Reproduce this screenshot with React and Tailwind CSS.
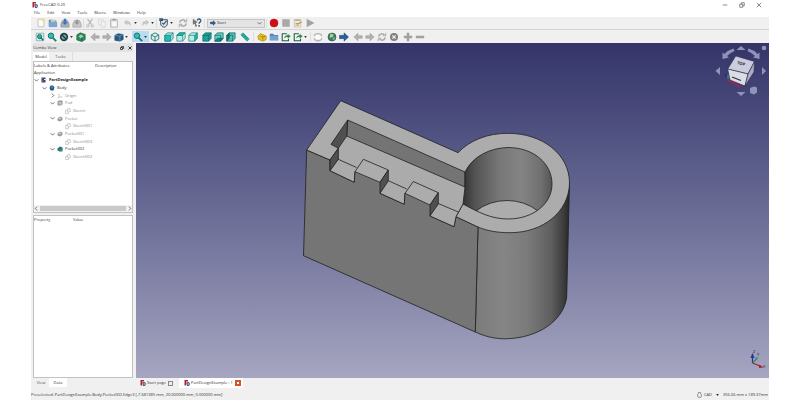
import React from 'react';

const glyphs = {
  file: <><path d="M2.5 1.5h5l2 2v7h-7z" fill="#fdfdf8" stroke="#bbb" /><circle cx="9" cy="2.5" r="1.8" fill="#f3dc62" /></>,
  open: <><path d="M1 2h4l1 1h4v7H1z" fill="#5f7d9e" /><path d="M1 5h10v6H1z" fill="#7ba5d3" /><path d="M3 2h6v3H3z" fill="#c8c8b4" /></>,
  save: <><path d="M1 7l2-4h6l2 4v4H1z" fill="#aab0b5" stroke="#8b9198" strokeWidth=".7" /><path d="M4.500 1h3v4h2L6 8.500 2.500 5h2z" fill="#3d78b5" /></>,
  print: <><path d="M1 7l2-4h6l2 4v4H1z" fill="#c9c9c9" stroke="#999" strokeWidth=".7" /><path d="M4.500 2h3v3h2L6 8 2.500 5h2z" fill="#999" /></>,
  cut: <g fill="none" stroke="#b5b5b5"><path d="M3 1l5 7M9 1L4 8" strokeWidth="1.300" /><circle cx="3.300" cy="9.500" r="1.500" /><circle cx="8.700" cy="9.500" r="1.500" /></g>,
  copy: <g fill="#f2f2f2" stroke="#d6d6d6"><path d="M2 1.500h5v7H2z" /><path d="M5 4h5v7H5z" /></g>,
  paste: <><path d="M2 2h8v9H2z" fill="#e8e8e8" stroke="#aaa" /><path d="M4 1h4v2H4z" fill="#9b9b9b" /><path d="M4 5h5v5H4z" fill="#fafafa" /></>,
  undo: <path d="M1 5l4-3v2c4 0 5 2 4 6-1-2-2-3-4-3v2z" fill="#c6c6c6" />,
  redo: <path d="M11 5L7 2v2c-4 0-5 2-4 6 1-2 2-3 4-3v2z" fill="#c6c6c6" />,
  shield: <><path d="M2 2h8v5c0 2-2 4-4 4S2 9 2 7z" fill="#dce3e8" stroke="#40596b" strokeWidth="1.200" /><path d="M1 1h3v2H1zM4 6l1.500 1.500L9 3.500" fill="none" stroke="#334f66" strokeWidth="1.300" /></>,
  refresh: <g fill="none" stroke="#acacac" strokeWidth="1.800"><path d="M2 5.500C2.500 2 7 1 9 4M10 6.500C9.500 10 5 11 3 8" /><path d="M10.500 1v3.500H7M1.500 11V7.500H5" strokeWidth="1.200" /></g>,
  help: <><path d="M1 1l6 4-2.500 1L6 9.500 4.500 11 3 7 1 8z" fill="#777" /><path d="M6.500 3c0-3 4.500-2 4 .5C10 5.500 8.500 5 8.500 7M8.500 8.500v2" fill="none" stroke="#2e5675" strokeWidth="1.700" /></>,
  record: <circle cx="6" cy="6" r="4.800" fill="#cf1018" stroke="#a20a10" strokeWidth=".6" />,
  stop: <path d="M1.500 1.500h9v9h-9z" fill="#a9a9a9" />,
  edit: <><path d="M1.500 2h8v9h-8z" fill="#eee8d4" stroke="#b7ad8c" strokeWidth=".6" /><path d="M2 2h7v1H2zM3 6h5v1H3zM3 8h4v1H3z" fill="#8c8878" /><path d="M5 7l5-3 1 1-5 3z" fill="#d29a34" /></>,
  play: <path d="M2 1l9.500 5L2 11z" fill="#a3a3a3" />,
  fit: <><path d="M1.500 1.500h9v9h-9z" fill="#e1f0ee" stroke="#83aaa5" /><circle cx="5.500" cy="5.500" r="2.600" fill="#2ab1a4" stroke="#136b66" /><path d="M7 7l3 3" stroke="#136b66" strokeWidth="1.700" /></>,
  zoom: <><circle cx="4.800" cy="4.500" r="3.300" fill="#35bbb0" stroke="#13776f" strokeWidth="1.200" /><path d="M7 7l4 4" stroke="#13776f" strokeWidth="2.200" /></>,
  ban: <><circle cx="6" cy="6" r="4" fill="#7fa39e" stroke="#1c4646" strokeWidth="2" /><path d="M3.500 3.500l5 5" stroke="#12302f" strokeWidth="1.500" /></>,
  box: <><path d="M1 3.500L5 1l6 2v6l-4 2.500-6-2z" fill="#2f8c54" stroke="#1c5937" strokeWidth=".8" /><path d="M3 5l3-2 3 2-3 3z" fill="#9bd2c7" /><path d="M7 6.500v4" stroke="#164d39" /></>,
  left: <path d="M1 6l5-4.500v3h5v3H6v3z" fill="#b2b2b2" stroke="#959595" strokeWidth=".6" />,
  right: <path d="M11 6L6 1.500v3H1v3h5v3z" fill="#b2b2b2" stroke="#959595" strokeWidth=".6" />,
  link: <><path d="M1 4l4-2 6 1v6l-4 2-6-1z" fill="#245984" stroke="#123b5c" strokeWidth=".6" /><path d="M1 4l6 1v6M7 5l4-2" fill="none" stroke="#79aad0" strokeWidth=".8" /></>,
  iso: <g fill="#d4f2ee" stroke="#18726d" strokeWidth="1"><path d="M6 1l4.500 2.500v5L6 11 1.500 8.500v-5z" /><path d="M1.500 3.500L6 6l4.500-2.500M6 6v5" /></g>,
  front: <g stroke="#147d78" strokeWidth=".8"><path d="M1 4l3-3h7v6.500L8 11H1z" fill="#9ce4dd" /><path d="M1 4h7v7H1z" fill="#21bdb1" /><path d="M8 4l3-3" /></g>,
  top: <g stroke="#147d78" strokeWidth=".8"><path d="M1 4l3-3h7v6.500L8 11H1z" fill="#bdece7" /><path d="M1 4l3-3h7L8 4z" fill="#21bdb1" /><path d="M1 4h7v7" fill="none" /></g>,
  side: <g stroke="#147d78" strokeWidth=".8"><path d="M1 4l3-3h7v6.500L8 11H1z" fill="#bdece7" /><path d="M8 4l3-3v6.500L8 11z" fill="#21bdb1" /><path d="M1 4h7" /></g>,
  rear: <g stroke="#0c6662" strokeWidth=".8"><path d="M1 4l3-3h7v6.500L8 11H1z" fill="#19a197" /><path d="M1 4h7v7M8 4l3-3" fill="none" /></g>,
  bottom: <g stroke="#0c6662" strokeWidth=".8"><path d="M1 4l3-3h7v6.500L8 11H1z" fill="#65c9c0" /><path d="M1 11l3-3.500h7L8 11z" fill="#138b83" /><path d="M1 4h7v7" fill="none" /></g>,
  leftside: <g stroke="#0c6662" strokeWidth=".8"><path d="M1 4l3-3h7v6.500L8 11H1z" fill="#54bdb4" /><path d="M1 4l3-3v6.500L1 11z" fill="#0d7a73" /><path d="M1 4h7v7" fill="none" /></g>,
  measure: <><path d="M1 3.500L3.500 1 11 8.500 8.500 11z" fill="#21b1a7" stroke="#147d78" strokeWidth=".6" /><path d="M4 4l1-1M6 6l1-1M8 8l1-1" stroke="#0d5a57" strokeWidth=".7" /></>,
  part: <><path d="M1 5l3-3 3 1 4 2v4l-4 2-5-2z" fill="#e4c11c" stroke="#a58312" strokeWidth=".8" /><path d="M4 5l3 1v3M7 6l3-1" fill="none" stroke="#876a0a" strokeWidth=".8" /></>,
  folder: <><path d="M1 2h4l1 1.500h5V10H1z" fill="#527ead" /><path d="M1 4.500h10V10H1z" fill="#72a2d4" /></>,
  export: <><path d="M7 2H1.500v8.500H9V8" fill="#f2f7f2" stroke="#215d50" strokeWidth="1.300" /><path d="M4 8c0-3 1.500-4 4-4V2l3.500 3L8 8V6C6 6 5 6.500 4 8z" fill="#2d8a43" /></>,
  page: <><path d="M1.500 5C2 1 10 1 10.500 5M1.500 7.500C2 11.500 10 11.500 10.500 7.500" fill="none" stroke="#b4b4b4" strokeWidth="1.600" /><path d="M3 3.500h6v5H3z" fill="#fafafa" /></>,
  globe: <><circle cx="6" cy="6" r="4.800" fill="#3b7c56" stroke="#2b534d" strokeWidth=".7" /><path d="M4 2l4 1-1 3-4 1z" fill="#a7da89" /><path d="M7 7l3-1-1 3-2 1z" fill="#78a7bf" /></>,
  go: <path d="M11.500 6L6 1v3H.5v4H6v3z" fill="#285f97" stroke="#173f69" strokeWidth=".5" />,
  close: <><circle cx="6" cy="6" r="4.800" fill="#808080" /><path d="M4 4l4 4M8 4L4 8" stroke="#eee" strokeWidth="1.500" /></>,
  plus: <path d="M4.500 1h3v3.500H11v3H7.500V11h-3V7.500H1v-3h3.500z" fill="#a0a0a0" />,
  minus: <path d="M1 4.500h10v3H1z" fill="#a0a0a0" />,
  logo: <><path d="M1 0h7v3H4v2h3v2H4v4H1z" fill="#b5202b" /><path d="M6 4.500l3-.5 2.500 2v4L9 12H6.500L5 9.500z" fill="#37578f" /><circle cx="8.300" cy="8" r="1.400" fill="#e8eef6" /></>,
  doc: <><path d="M1 1h8v10H1z" fill="#27497d" /><path d="M2 2h3v2H2zM2 6h3v4H2z" fill="#c03a43" /><path d="M6 4h4v2H6z" fill="#dce8f4" /></>,
  body: <><path d="M3 1h5l3 4-2 6H3L1 6z" fill="#265988" /><path d="M4 3l4 1-2 3z" fill="#6f9ecb" /></>,
  origin: <path d="M4 1v7h7M4 8l-3 3" fill="none" stroke="#aaa" strokeWidth="1.200" />,
  pad: <><path d="M1 3l3-2h7v8l-3 2H1z" fill="#999" /><path d="M3 5h5M3 7.500h5M8 4v6" stroke="#eee" /></>,
  sketch: <g fill="#fafafa" stroke="#adadad" strokeWidth="1.100"><path d="M1 5h6v6H1z" /><path d="M4 2l6-1 1 6-5 1z" /></g>,
  pocket: <><path d="M1 5l5-4 5 2v5l-5 3-5-2z" fill="#9a9a9a" /><path d="M3 6l4-3 2 1-4 3z" fill="#ddd" /></>,
  active: <><path d="M1 5l5-4 5 2v5l-5 3-5-2z" fill="#276790" /><path d="M5 5h6v6H5z" fill="#2d9955" /></>,
};

function Icon({ name, className = 'size-[10px]' }) {
  return <svg viewBox="0 0 12 12" className={`${className} shrink-0`} aria-hidden="true">{glyphs[name]}</svg>;
}

function Tool({ name, label, drop, active }) {
  return (
    <button aria-label={label || name} className={`flex h-[11px] shrink-0 items-center ${drop ? 'w-[17px]' : 'w-3'} ${active ? 'bg-[#b9dcf3]' : ''}`}>
      <span className="flex w-3 shrink-0 justify-center"><Icon name={name} /></span>
      {drop && <svg viewBox="0 0 4 3" className="h-[2px] w-[3px]"><path d="M0 0h4L2 3z" fill="#333" /></svg>}
    </button>
  );
}

function Group({ items }) {
  return <div className="flex">{items.map(([name, label, drop, active]) => <Tool key={label} name={name} label={label} drop={drop} active={active} />)}</div>;
}

const Divider = () => <div className="h-[9px] w-px bg-[#dedede]" />;

const tree = [
  ['pl-0', 'v', 'doc', 'PartDesignExample', 'font-bold text-[#222]'],
  ['pl-[8px]', 'v', 'body', 'Body', 'text-[#333]'],
  ['pl-[16px]', '>', 'origin', 'Origin', 'text-[#888]'],
  ['pl-[16px]', 'v', 'pad', 'Pad', 'text-[#888]'],
  ['pl-[24px]', '', 'sketch', 'Sketch', 'text-[#888]'],
  ['pl-[16px]', 'v', 'pocket', 'Pocket', 'text-[#888]'],
  ['pl-[24px]', '', 'sketch', 'Sketch001', 'text-[#888]'],
  ['pl-[16px]', 'v', 'pocket', 'Pocket001', 'text-[#888]'],
  ['pl-[24px]', '', 'sketch', 'Sketch003', 'text-[#888]'],
  ['pl-[16px]', 'v', 'active', 'Pocket002', 'text-[#333]'],
  ['pl-[24px]', '', 'sketch', 'Sketch002', 'text-[#888]'],
];

function Chevron({ dir }) {
  const d = { v: 'M1 2l3 3 3-3', '>': 'M3 1l3 3-3 3', '<': 'M5 1L2 4l3 3' }[dir];
  return <svg viewBox="0 0 8 8" className="size-[5px] shrink-0">{d && <path d={d} fill="none" stroke="#555" strokeWidth="1.300" />}</svg>;
}

function Dock() {
  return (
    <aside className="flex w-[105px] shrink-0 flex-col pr-[3px] pl-[2px]">
      <div className="flex h-[9px] items-center bg-[#e2e2e2]">
        <h2 className="flex-1">Combo View</h2>
        <button aria-label="Float" className="w-[8px]"><svg viewBox="0 0 8 8" className="size-[4px]"><path d="M1 3h4v4H1zM3 3V1h4v4H5" fill="none" stroke="#222" strokeWidth="1.500" /></svg></button>
        <button aria-label="Close panel" className="w-[5px]"><svg viewBox="0 0 8 8" className="size-[4px]"><path d="M1 1l6 6M7 1L1 7" stroke="#222" strokeWidth="1.800" /></svg></button>
      </div>
      <div className="flex h-[9px]">
        <button className="w-4 bg-white">Model</button>
        <button className="w-6 border-r border-[#ddd] text-[#555]">Tasks</button>
      </div>
      <div className="flex h-[152px] flex-col border border-[#c2c2c2] bg-white">
        <div className="flex h-[7px] items-center">
          <span className="w-[61px]">Labels &amp; Attributes</span><span>Description</span>
        </div>
        <ul className="grid h-[92px] grid-rows-12">
          <li className="flex items-center">Application</li>
          {tree.map(([pad, dir, icon, text, tone]) => (
            <li key={text} className={`flex items-center ${pad} ${tone}`}>
              <Chevron dir={dir} /><Icon name={icon} className="mr-[2px] ml-[2px] size-[6px]" />{text}
            </li>
          ))}
        </ul>
        <div className="mt-auto flex h-[7px] items-center bg-[#f1f1f1]">
          <Chevron dir="<" /><div className="mx-px h-[5px] flex-1 bg-[#c9c9c9]" /><Chevron dir=">" />
        </div>
      </div>
      <div className="mt-[2px] flex-1 border border-[#c2c2c2] bg-white">
        <div className="flex h-[8px] items-center"><span className="w-[39px]">Property</span><span>Value</span></div>
      </div>
      <div className="flex h-[11px] items-start">
        <button className="h-[9px] w-4 text-[#555]">View</button>
        <button className="h-[9px] w-[18px] bg-white">Data</button>
      </div>
    </aside>
  );
}

function Viewport() {
  return (
    <svg viewBox="136 43 633 335" className="min-h-0 w-full flex-1 bg-linear-to-b from-[#343469] to-[#a6a6c1]" role="img" aria-label="3D view">
      <defs>
        <linearGradient id="outer" x1="475" x2="570" y1="0" y2="0" gradientUnits="userSpaceOnUse">
          <stop offset="0" stopColor="#7b7b7b" /><stop offset=".3" stopColor="#858585" /><stop offset=".55" stopColor="#7b7b7b" /><stop offset=".8" stopColor="#5f5f5f" /><stop offset=".93" stopColor="#3d3d3d" /><stop offset="1" stopColor="#242424" />
        </linearGradient>
        <linearGradient id="inner" x1="464" x2="552" y1="0" y2="0" gradientUnits="userSpaceOnUse">
          <stop offset="0" stopColor="#353535" /><stop offset=".12" stopColor="#525252" /><stop offset=".4" stopColor="#777" /><stop offset=".65" stopColor="#848484" /><stop offset=".88" stopColor="#6f6f6f" /><stop offset="1" stopColor="#555" />
        </linearGradient>
        <clipPath id="bore"><path d="M465 172C473 156 490 148 508 147.500C533 147.500 552 163 552 184C552 204 533 219 508 219C491 219 478 212 463 204L465 187z" /></clipPath>
      </defs>
      <g stroke="#202020" strokeWidth=".8" strokeLinejoin="round">
        <path d="M478 227L475.300 332C484 336 494 339 506 338.800C539 338 564 320 566.700 297L569.500 183z" fill="url(#outer)" />
        <path d="M306.700 150L303.500 255.700L475.300 332L478 227L456 216.700L454 226.700L430 216L430 205L405 193.300L404.300 204.300L380 193.300V182.300L355 171.700L354.300 182.300L330 170.700V160z" fill="#757575" />
        <path d="M340.700 100.700L458 152.700C470 140 488 133.300 508 133.300C542 133.300 569.500 154 569.500 183C569 212 543 232.700 510 232.700C498 232.700 487 231 478 227L456 216.700L463 204L338.300 148.300L330 160L306.700 150z" fill="#acacac" />
        <path d="M346.700 136L465 187L463 204L456 216.700L454 226.700L430 216L380 193.300L354.300 182.300L330 170.700L338.300 159.300V148.300z" fill="#ababab" stroke="none" />
        <path d="M347.700 120L465 172V187L346.700 136z" fill="#747474" />
        <path d="M347.700 120L331 144.300L338.300 148.300L346.700 136z" fill="#505050" />
        <path d="M338.300 148.300L330 160V170.700L338.300 159.300z" fill="#505050" />
        <path d="M338.300 159.300L356.500 167.500M388.300 180.700L406.700 189M438.300 203.500L458.300 212M330 170.700L354.300 182.300L355 171.700M380 193.300L404.300 204.300L405 193.300M430 216L454 226.700L456 216.700L463 204" fill="none" />
        <path d="M355 171.700L380 182.300V193.500L354.300 183z" fill="#757575" stroke="none" />
        <path d="M405 193.300L430 205V216.500L404.300 205z" fill="#757575" stroke="none" />
        <path d="M355 171.700L363.300 159.300L388.300 170L380 182.300zM405 193.300L413.300 181.500L438.300 192.700L430 205z" fill="#acacac" />
        <path d="M388.300 170L380 182.300V193.300L388.300 181zM438.300 192.700L430 205V216L438.300 204z" fill="#505050" />
        <path d="M355 171.700L354.300 182.300M405 193.300L404.300 204.300" />
        <g clipPath="url(#bore)">
          <path d="M460 145h95v80h-95z" fill="url(#inner)" stroke="none" />
          <ellipse cx="507" cy="236" rx="43.500" ry="35.500" fill="#acacac" />
        </g>
        <path d="M465 172C473 156 490 148 508 147.500C533 147.500 552 163 552 184C552 204 533 219 508 219C491 219 478 212 463 204L465 187z" fill="none" />
      </g>
      <g fill="#9292b8">
        <path d="M736.500 50l4.500-4 4.500 4zM736.500 92l4.500 4 4.500-4zM720 67v8l-4.500-4zM762 67v8l4-4z" />
        <circle cx="764" cy="48" r="2.300" />
        <path d="M733.500 48.500Q728 50 724.500 54L722.500 52.500V59L729 57.500L727 56Q730 53 734.500 51zM748.500 48.500Q754 50 757.500 54L759.500 52.500V59L753 57.500L755 56Q752 53 747.500 51z" />
        <path d="M750 88l4-1.500 3 1v5l-3 2-4-1.500z" />
      </g>
      <g stroke="#28283a" strokeWidth=".6" strokeLinejoin="round">
        <path d="M735.700 56L754.500 61.500L748 74L727.700 69z" fill="#ccccdf" />
        <path d="M727.700 69L748 74L745 86L730 80z" fill="#dcdce8" />
        <path d="M754.500 61.500L754 72L745 86L748 74z" fill="#acacc8" />
        <path d="M732 77l9 3.500" stroke="#333" strokeWidth="1.200" />
      </g>
      <text x="737" y="65" fontSize="4" fontWeight="bold" fill="#222" transform="rotate(14 741 64)">TOP</text>
      <path d="M724.500 74l4 5" stroke="#2629a4" strokeWidth="1.200" /><path d="M728 80l12 7" stroke="#a62347" strokeWidth="1.500" /><path d="M728 79V75" stroke="#43aa63" />
      <g fill="none" strokeWidth="1.200">
        <path d="M752.500 363V354" stroke="#24349b" /><path d="M752.500 363l4-4" stroke="#2a8f5c" /><path d="M752.500 363l10 4" stroke="#a52232" />
      </g>
      <path d="M750.500 358l2-5 2 5z" fill="#24349b" /><path d="M759 364.500l4 3-4 .5z" fill="#a52232" /><path d="M755 358l3-1-1 3z" fill="#2a8f5c" />
      <g fontSize="4" fill="#222"><text x="753" y="353">Z</text><text x="757" y="356">Y</text><text x="763" y="368">X</text></g>
    </svg>
  );
}

export default function App() {
  return (
    <div className="min-h-screen bg-white px-[31px] font-['Open_Sans','Noto_Sans',sans-serif] text-[4px] leading-[6px] text-[#333]">
      <div className="flex min-h-screen flex-col bg-[#f0f0f0]">
        <header className="bg-white">
          <div className="flex h-[9px] items-center pl-px">
            <Icon name="logo" className="size-[6px]" />
            <h1 className="ml-[2px] flex-1">FreeCAD 0.20</h1>
            <div className="flex gap-[11px] pr-[7px]">
              {[['Minimize', 'M1 4h6'], ['Restore', 'M1 3h4v4H1zM3 3V1h4v4H5'], ['Close', 'M1 1l6 6M7 1L1 7']].map(([label, d]) => (
                <button key={label} aria-label={label}><svg viewBox="0 0 8 8" className="size-[6px]"><path d={d} fill="none" stroke="#555" strokeWidth=".9" /></svg></button>
              ))}
            </div>
          </div>
          <nav className="flex h-[8px] items-center gap-[7px] pl-[3px]">
            {['File', 'Edit', 'View', 'Tools', 'Macro', 'Windows', 'Help'].map((item) => <button key={item}>{item}</button>)}
          </nav>
        </header>

        <div className="flex h-[13px] items-center border-b border-[#d4d4d4] pl-1">
          <Group items={[['file', 'New'], ['open', 'Open'], ['save', 'Save'], ['print', 'Print']]} />
          <Divider />
          <Group items={[['cut', 'Cut'], ['copy', 'Copy'], ['paste', 'Paste']]} />
          <div className="ml-[2px] flex"><Group items={[['undo', 'Undo', true], ['redo', 'Redo', true]]} /></div>
          <Divider />
          <div className="ml-px flex gap-[2px]">
            <Tool name="shield" label="Validate" drop />
            <Tool name="refresh" label="Refresh" />
            <Tool name="help" label="What is this" />
          </div>
          <div className="mr-[2px] ml-px"><Divider /></div>
          <label className="flex h-[9px] w-[58px] items-center border border-[#c4c4c4] bg-[#e4e4e4] px-[2px]">
            <Icon name="go" className="size-[6px]" />
            <select aria-label="Workbench" className="ml-px h-[7px] flex-1 appearance-none bg-transparent"><option>Start</option><option>Part Design</option></select>
            <Chevron dir="v" />
          </label>
          <div className="mx-px"><Divider /></div>
          <Group items={[['record', 'Record macro'], ['stop', 'Stop macro'], ['edit', 'Edit macro'], ['play', 'Run macro']]} />
        </div>

        <div className="flex h-[13px] items-center pl-[3px]">
          <Group items={[['fit', 'Fit all'], ['zoom', 'Fit selection'], ['ban', 'Draw style', true], ['box', 'Bounding box']]} />
          <div className="ml-[2px]"><Group items={[['left', 'Back'], ['right', 'Forward'], ['link', 'Linked object', true]]} /></div>
          <div className="ml-[2px]"><Group items={[['zoom', 'Zoom', true, true], ['iso', 'Isometric']]} /></div>
          <div className="ml-[2px]"><Group items={[['front', 'Front'], ['top', 'Top'], ['side', 'Right']]} /></div>
          <div className="ml-[2px]"><Group items={[['rear', 'Rear'], ['bottom', 'Bottom'], ['leftside', 'Left']]} /></div>
          <div className="ml-[2px] flex"><Tool name="measure" label="Measure" /></div>
          <div className="mx-[2px]"><Divider /></div>
          <Group items={[['part', 'Create part'], ['folder', 'Create group'], ['export', 'Make link'], ['export', 'Link actions', true]]} />
          <div className="mx-px"><Divider /></div>
          <Tool name="page" label="Start page" />
          <div className="ml-[2px]"><Group items={[['globe', 'Open website'], ['go', 'Go']]} /></div>
          <div className="ml-[2px]"><Group items={[['left', 'Previous page'], ['right', 'Next page'], ['refresh', 'Reload page'], ['close', 'Stop loading']]} /></div>
          <div className="ml-[2px]"><Group items={[['plus', 'Zoom in'], ['minus', 'Zoom out']]} /></div>
        </div>

        <main className="flex flex-1">
          <Dock />
          <section className="flex min-w-0 flex-1 flex-col">
            <Viewport />
            <div className="flex h-[11px] items-start">
              <button className="flex h-[10px] w-[43px] items-center gap-px pl-[4px]">
                <Icon name="logo" className="size-[6px]" />Start page<span className="ml-px size-[5px] border border-[#888]" />
              </button>
              <button className="flex h-[10px] items-center gap-px bg-white pr-[2px] pl-[5px]">
                <Icon name="logo" className="size-[6px]" />PartDesignExample : 1
                <svg viewBox="0 0 6 6" className="ml-px size-[6px]"><path d="M0 0h6v6H0z" fill="#d4542c" /><path d="M2 2l2 2M4 2L2 4" stroke="#fff" /></svg>
              </button>
            </div>
          </section>
        </main>

        <footer className="flex h-[11px] items-center pr-px">
          <span className="flex-1">Preselected: PartDesignExample.Body.Pocket002.Edge3 [-7.681385 mm, 20.000000 mm, 0.000000 mm]</span>
          <button className="mr-[4px] flex items-center gap-[2px]">
            <svg viewBox="0 0 8 10" className="h-[6px] w-[5px]"><path d="M2 1h4v2l1 1v4L5 9H3L1 8V4l1-1z" fill="none" stroke="#555" /></svg>
            CAD
            <svg viewBox="0 0 4 3" className="ml-[2px] h-[2px] w-[3px]"><path d="M0 0h4L2 3z" fill="#222" /></svg>
          </button>
          <span>356.66 mm x 189.37mm</span>
        </footer>
      </div>
    </div>
  );
}
